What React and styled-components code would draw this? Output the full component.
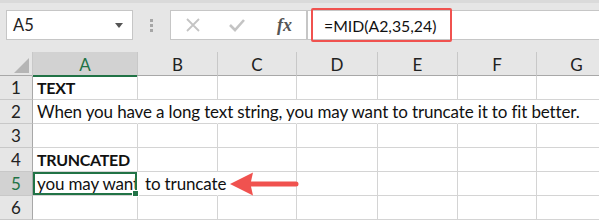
import styled, { createGlobalStyle } from "styled-components";

const GREEN = "#217346";
const RED = "#f0524f";

const COLS = [
  { name: "A", width: 105 },
  { name: "B", width: 80 },
  { name: "C", width: 79 },
  { name: "D", width: 81 },
  { name: "E", width: 80 },
  { name: "F", width: 79 },
  { name: "G", width: 80 },
];
const TEMPLATE = `33px ${COLS.map((c) => c.width + "px").join(" ")}`;

// 시트 내용. overflow 는 글자가 옆 칸으로 넘어가는 칸 수
const ROWS = [
  { n: 1, text: "TEXT", bold: true, overflow: 0 },
  {
    n: 2,
    text: "When you have a long text string, you may want to truncate it to fit better.",
    overflow: 6,
  },
  { n: 3 },
  { n: 4, text: "TRUNCATED", bold: true, overflow: 0 },
  { n: 5, text: "you may want", rest: "to truncate", selected: true, overflow: 2 },
  { n: 6 },
];

const GlobalStyle = createGlobalStyle`
  body {
    margin: 0;
    background: #fff;
    font-family: "Lato", "Open Sans", sans-serif;
    overflow: hidden;
  }
`;

const App = () => {
  return (
    <S.Page>
      <GlobalStyle />
      <S.Toolbar>
        <S.NameBox>
          A5
          <S.Caret />
        </S.NameBox>
        <S.Grip>
          <i />
          <i />
          <i />
        </S.Grip>
        <S.FxBox>
          <svg width="16" height="16" viewBox="0 0 16 16">
            <path d="M2 2 L14 14 M14 2 L2 14" stroke="#c4c4c4" strokeWidth="1.8" fill="none" />
          </svg>
          <svg width="18" height="16" viewBox="0 0 18 16">
            <path d="M2 8 L7 13 L16 3" stroke="#c4c4c4" strokeWidth="2.6" fill="none" />
          </svg>
          <S.Fx>fx</S.Fx>
        </S.FxBox>
        <S.FormulaInput>
          <S.Highlight>=MID(A2,35,24)</S.Highlight>
        </S.FormulaInput>
      </S.Toolbar>

      <S.Sheet>
        <S.HeaderRow>
          <S.Corner />
          {COLS.map((c) => (
            <S.ColHead key={c.name} $active={c.name === "A"}>
              {c.name}
            </S.ColHead>
          ))}
        </S.HeaderRow>

        {ROWS.map((row) => (
          <S.Row key={row.n}>
            <S.RowHead $active={row.selected}>{row.n}</S.RowHead>
            {COLS.map((c, i) => (
              <S.Cell key={c.name} $noLine={i < row.overflow}>
                {i === 0 && row.text && (
                  <S.Value $bold={row.bold} $clip={row.selected}>
                    {row.text}
                  </S.Value>
                )}
                {i === 0 && row.selected && <S.Selection />}
                {i === 1 && row.rest && (
                  <>
                    <S.Rest>{row.rest}</S.Rest>
                    <S.Arrow width="70" height="26" viewBox="0 0 70 26">
                      <path d="M0 13 L23 1.5 L21 10.5 L66 10.5 A2.5 2.5 0 0 1 66 15.5 L21 15.5 L23 24.5 Z" fill={RED} />
                    </S.Arrow>
                  </>
                )}
              </S.Cell>
            ))}
          </S.Row>
        ))}
      </S.Sheet>
    </S.Page>
  );
};
export default App;

const Page = styled.div`
  width: 599px;
  height: 220px;
  overflow: hidden;
`;

const Toolbar = styled.div`
  height: 52px;
  background: #e6e6e6;
  border-top: 3px solid #dadada;
  box-sizing: border-box;
  display: flex;
  align-items: flex-start;
  padding-top: 7px;
  padding-left: 6px;
`;

const NameBox = styled.div`
  width: 127px;
  height: 30px;
  box-sizing: border-box;
  background: #fff;
  border: 1px solid #c6c6c6;
  display: flex;
  align-items: center;
  justify-content: space-between;
  padding: 0 9px 0 6px;
  font-family: "Lato", sans-serif;
  font-size: 16.5px;
  color: #222;
`;

const Caret = styled.span`
  width: 0;
  height: 0;
  border-left: 4.5px solid transparent;
  border-right: 4.5px solid transparent;
  border-top: 5px solid #555;
`;

const Grip = styled.div`
  width: 37px;
  height: 30px;
  display: flex;
  flex-direction: column;
  align-items: center;
  justify-content: center;
  gap: 2px;
  i {
    width: 3px;
    height: 3px;
    background: #a6a6a6;
  }
`;

const FxBox = styled.div`
  width: 137px;
  height: 30px;
  box-sizing: border-box;
  background: #fff;
  border: 1px solid #c6c6c6;
  display: flex;
  align-items: center;
  padding-left: 14px;
  gap: 27px;
`;

const Fx = styled.span`
  font-family: "Liberation Serif", serif;
  font-style: italic;
  font-weight: 700;
  font-size: 18px;
  color: #555;
  margin-left: 4px;
`;

const FormulaInput = styled.div`
  flex: 1;
  height: 30px;
  box-sizing: border-box;
  background: #fff;
  border: 1px solid #c6c6c6;
  border-right: none;
  position: relative;
`;

const Highlight = styled.div`
  position: absolute;
  left: 3px;
  top: -3px;
  width: 141px;
  height: 34px;
  box-sizing: border-box;
  border: 2.5px solid ${RED};
  border-radius: 2px;
  display: flex;
  align-items: center;
  padding-left: 11px;
  font-family: "Lato", sans-serif;
  font-size: 15.8px;
  color: #111;
`;

const Sheet = styled.div`
  background: #fff;
`;

const HeaderRow = styled.div`
  display: grid;
  grid-template-columns: ${TEMPLATE};
  height: 24px;
  background: #e6e6e6;
  border-bottom: 1px solid #a8a8a8;
  box-sizing: border-box;
`;

const Corner = styled.div`
  position: relative;
  border-right: 1px solid #c8c8c8;
  &::after {
    content: "";
    position: absolute;
    right: 3px;
    bottom: 3px;
    border-left: 15px solid transparent;
    border-bottom: 15px solid #b5b5b5;
  }
`;

const ColHead = styled.div`
  display: flex;
  align-items: center;
  justify-content: center;
  font-size: 17px;
  padding-top: 2px;
  color: ${(p) => (p.$active ? GREEN : "#222")};
  background: ${(p) => (p.$active ? "#d2d2d2" : "transparent")};
  border-right: 1px solid #c8c8c8;
  border-bottom: 2px solid ${(p) => (p.$active ? GREEN : "transparent")};
  margin-bottom: -1px;
`;

const Row = styled.div`
  display: grid;
  grid-template-columns: ${TEMPLATE};
  height: 24px;
`;

const RowHead = styled.div`
  display: flex;
  align-items: center;
  justify-content: center;
  font-size: 17px;
  color: ${(p) => (p.$active ? GREEN : "#222")};
  background: ${(p) => (p.$active ? "#d2d2d2" : "#e6e6e6")};
  border-right: 1px solid #a8a8a8;
  border-bottom: 1px solid #c8c8c8;
`;

const Cell = styled.div`
  position: relative;
  min-width: 0;
  border-right: 1px solid ${(p) => (p.$noLine ? "transparent" : "#d4d4d4")};
  border-bottom: 1px solid #d4d4d4;
  display: flex;
  align-items: center;
`;

const Value = styled.span`
  position: relative;
  z-index: 1;
  box-sizing: border-box;
  padding-left: 4px;
  white-space: nowrap;
  font-size: ${(p) => (p.$bold ? "16px" : "17px")};
  letter-spacing: ${(p) => (p.$bold ? "-0.3px" : "-0.14px")};
  font-weight: ${(p) => (p.$bold ? 700 : 400)};
  color: #111;
  ${(p) => p.$clip && "width: 100%; overflow: hidden; flex-shrink: 0;"}
`;

const Rest = styled.span`
  position: relative;
  z-index: 1;
  padding-left: 7px;
  white-space: nowrap;
  font-size: 17px;
  letter-spacing: -0.14px;
  color: #111;
`;

const Arrow = styled.svg`
  position: absolute;
  left: 92px;
  top: -1px;
  z-index: 1;
`;

const Selection = styled.div`
  position: absolute;
  left: 0;
  top: 0;
  right: 0;
  bottom: 0;
  border: 2px solid ${GREEN};
  z-index: 2;
  &::after {
    content: "";
    position: absolute;
    right: -4px;
    bottom: -4px;
    width: 5px;
    height: 5px;
    background: ${GREEN};
    border: 1px solid #fff;
  }
`;

const S = {
  Page,
  Toolbar,
  NameBox,
  Caret,
  Grip,
  FxBox,
  Fx,
  FormulaInput,
  Highlight,
  Sheet,
  HeaderRow,
  Corner,
  ColHead,
  Row,
  RowHead,
  Cell,
  Value,
  Rest,
  Arrow,
  Selection,
};
